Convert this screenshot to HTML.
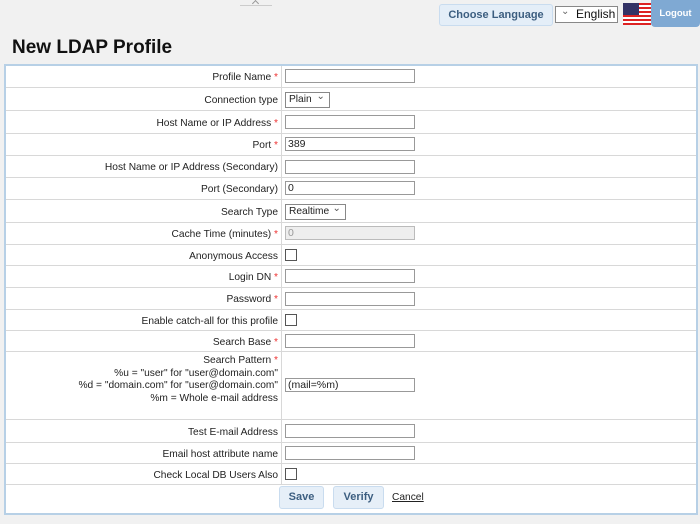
<!DOCTYPE html>
<html><head><style>
*{box-sizing:border-box;margin:0;padding:0}
body{width:700px;height:524px;background:#f1f1f1;font-family:"Liberation Sans",sans-serif;font-size:10.2px;color:#222;position:relative;overflow:hidden}
.top{position:absolute;left:240px;top:0;width:32px;height:6px;border-bottom:1px solid #ccc}
.top:after{content:"";position:absolute;left:13px;top:1px;width:4px;height:4px;border-left:1px solid #999;border-top:1px solid #999;transform:rotate(45deg)}
.cl{position:absolute;left:439px;top:4px;width:114px;height:22px;background:#e4eef8;border:1px solid #c9dcef;border-radius:3px;color:#3c5e80;font-weight:bold;font-size:11px;text-align:center;line-height:20px}
.sel{position:absolute;left:555px;top:6px;width:63px;height:17px;background:#fff;border:1px solid #888;font-size:12px;line-height:15px;padding-left:20px;color:#111}
.sel:before{content:"⌄";position:absolute;left:5px;top:-3px;font-size:10px;color:#666}
.flag{position:absolute;left:623px;top:3px;width:28px;height:22px;background:repeating-linear-gradient(#d22 0 2px,#fff 2px 4px)}
.flag i{position:absolute;left:0;top:0;width:16px;height:12px;background:#336}
.lo{position:absolute;left:651px;top:0;width:49px;height:27px;background:#7fa9d3;border-radius:0 0 4px 4px;color:#fff;font-weight:bold;font-size:9.5px;text-align:center;line-height:27px}
h1{position:absolute;left:12px;top:37px;font-size:19px;font-weight:bold;color:#111}
.box{position:absolute;left:4px;top:64px;width:694px;height:451px;background:#fff;border:2px solid #b7d0e6}
.r{position:absolute;left:0;width:690px;border-bottom:1px solid #d8d8d8}
.l{position:absolute;left:0;width:276px;height:100%;border-right:1px solid #d8d8d8;text-align:right;padding:2px 3px 0 0;display:flex;align-items:center;justify-content:flex-end}
.s{color:#e33}
.in{position:absolute;left:279px;width:130px;height:14px;border:1px solid #999;background:#fff;font-size:10.5px;padding-left:2px;line-height:12px}
.cb{position:absolute;left:279px;width:12px;height:12px;border:1px solid #555;background:#fff}
.dd{position:absolute;left:279px;height:16px;border:1px solid #888;background:#fff;padding-left:3px;line-height:14px}
.dd:after{content:"⌄";position:absolute;right:4px;top:-3px;color:#555}
.btn{position:absolute;top:486px;height:23px;background:#e6eff8;border:1px solid #c9dcef;border-radius:3px;color:#3c5e80;font-weight:bold;font-size:11px;text-align:center;line-height:21px}
.pl{position:absolute;left:0;width:276px;height:100%;border-right:1px solid #d8d8d8;text-align:right;padding:3px 3px 0 0;line-height:12.5px}
</style></head><body>
<div class="top"></div>
<div class="cl">Choose Language</div>
<div class="sel">English</div>
<div class="flag"><i></i></div>
<div class="lo">Logout</div>
<h1>New LDAP Profile</h1>
<div class="box">
<div class="r" style="top:0;height:22px"><div class="l">Profile Name&nbsp;<span class="s">*</span></div><div class="in" style="top:3px"></div></div>
<div class="r" style="top:22px;height:23px"><div class="l">Connection type</div><div class="dd" style="top:4px;width:45px">Plain</div></div>
<div class="r" style="top:45px;height:23px"><div class="l">Host Name or IP Address&nbsp;<span class="s">*</span></div><div class="in" style="top:4px"></div></div>
<div class="r" style="top:68px;height:22px"><div class="l">Port&nbsp;<span class="s">*</span></div><div class="in" style="top:3px">389</div></div>
<div class="r" style="top:90px;height:22px"><div class="l">Host Name or IP Address (Secondary)</div><div class="in" style="top:4px"></div></div>
<div class="r" style="top:112px;height:22px"><div class="l">Port (Secondary)</div><div class="in" style="top:3px">0</div></div>
<div class="r" style="top:134px;height:23px"><div class="l">Search Type</div><div class="dd" style="top:4px;width:61px">Realtime</div></div>
<div class="r" style="top:157px;height:22px"><div class="l">Cache Time (minutes)&nbsp;<span class="s">*</span></div><div class="in" style="top:3px;background:#eee;border-color:#bbb;color:#999">0</div></div>
<div class="r" style="top:179px;height:21px"><div class="l">Anonymous Access</div><div class="cb" style="top:4px"></div></div>
<div class="r" style="top:200px;height:22px"><div class="l">Login DN&nbsp;<span class="s">*</span></div><div class="in" style="top:3px"></div></div>
<div class="r" style="top:222px;height:22px"><div class="l">Password&nbsp;<span class="s">*</span></div><div class="in" style="top:4px"></div></div>
<div class="r" style="top:244px;height:21px"><div class="l">Enable catch-all for this profile</div><div class="cb" style="top:4px"></div></div>
<div class="r" style="top:265px;height:21px"><div class="l">Search Base&nbsp;<span class="s">*</span></div><div class="in" style="top:3px"></div></div>
<div class="r" style="top:286px;height:68px"><div class="pl">Search Pattern&nbsp;<span class="s">*</span><br>%u = "user" for "user@domain.com"<br>%d = "domain.com" for "user@domain.com"<br>%m = Whole e-mail address</div><div class="in" style="top:26px">(mail=%m)</div></div>
<div class="r" style="top:354px;height:23px"><div class="l">Test E-mail Address</div><div class="in" style="top:4px"></div></div>
<div class="r" style="top:377px;height:21px"><div class="l">Email host attribute name</div><div class="in" style="top:3px"></div></div>
<div class="r" style="top:398px;height:21px"><div class="l">Check Local DB Users Also</div><div class="cb" style="top:4px"></div></div>
</div>
<div class="btn" style="left:279px;width:45px">Save</div>
<div class="btn" style="left:333px;width:51px">Verify</div>
<div style="position:absolute;left:392px;top:492px;text-decoration:underline;color:#222">Cancel</div>
</body></html>
